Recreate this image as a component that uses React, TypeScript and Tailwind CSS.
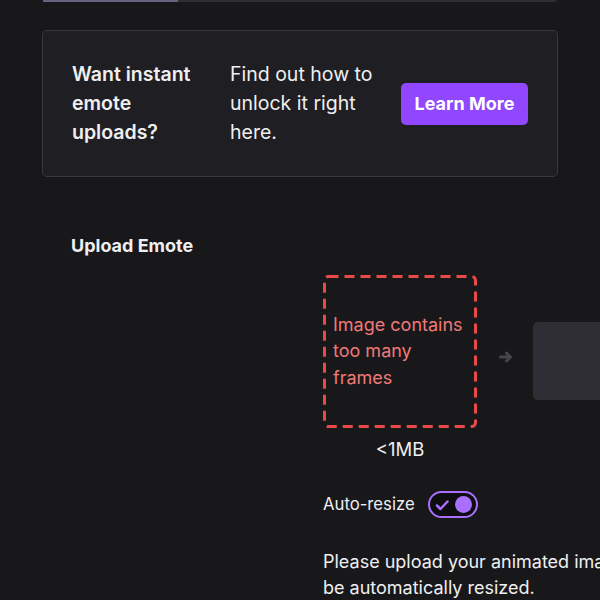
import React from "react";

const Toggle: React.FC = () => (
    <div className="relative w-[50px] h-[27px] rounded-full border-2 border-[#a970ff] bg-[#0e0e10] flex items-center justify-between px-[4px]">
        <svg width="15" height="14" viewBox="0 0 15 14" className="ml-[1px]">
            <path d="M2 7.5 L5.5 11 L12.5 3.5" fill="none" stroke="#a970ff" strokeWidth="2.5" strokeLinecap="round" strokeLinejoin="round" />
        </svg>
        <div className="w-[17px] h-[17px] rounded-full bg-[#a970ff]" />
    </div>
);

const Arrow: React.FC = () => (
    <svg width="14" height="12" viewBox="0 0 14 12">
        <path d="M1.5 6 H11 M7.5 2 L11.5 6 L7.5 10" fill="none" stroke="#45454b" strokeWidth="3" strokeLinecap="round" strokeLinejoin="round" />
    </svg>
);

export default function App() {
    return (
        <div
            className="w-[600px] h-[600px] overflow-hidden bg-[#18181b] text-[#efeff1]"
            style={{ fontFamily: "Inter, 'Noto Sans', sans-serif" }}
        >
            <div className="mx-[43px] w-[514px]">
                {/* progress bar tail */}
                <div className="h-[2px] bg-[#2e2e33] rounded-b">
                    <div className="h-full w-[135px] bg-[#6a6080]" />
                </div>

                {/* Promo card */}
                <div className="mt-[28px] -mx-[1px] flex items-center rounded-[5px] border border-[#38383e] bg-[#1f1f23] px-[29px] h-[147px]">
                    <div className="w-[150px] mr-[8px] text-[19.5px] leading-[29px] font-semibold">
                        Want instant emote uploads?
                    </div>
                    <div className="w-[165px] text-[19.5px] leading-[29px]">
                        Find out how to unlock it right here.
                    </div>
                    <button className="ml-auto h-[42px] w-[127px] rounded-[5px] bg-[#9147ff] text-[18px] font-bold text-white">
                        Learn More
                    </button>
                </div>

                {/* Upload */}
                <div className="mt-[57px] grid grid-cols-[252px_420px] px-[28px]">
                    <div className="text-[18px] leading-[24px] font-bold">Upload Emote</div>
                    <div />
                    <div />
                    <div className="mt-[17px]">
                        <div className="flex items-start">
                            <div className="flex flex-col items-center">
                                <div className="relative w-[154px] h-[153px] flex items-center px-[10px]">
                                    <svg className="absolute inset-0" width="154" height="153">
                                        <rect x="1.5" y="1.5" width="151" height="150" rx="4" fill="none" stroke="#e8494b" strokeWidth="3" strokeDasharray="10 6" />
                                    </svg>
                                    <span className="text-[18px] leading-[26.5px] text-[#f07878]">
                                        Image contains too many frames
                                    </span>
                                </div>
                                <div className="mt-[10px] text-[18.5px] leading-[22px]">&lt;1MB</div>
                            </div>
                            <div className="mt-[76px] ml-[22px] mr-[20px]">
                                <Arrow />
                            </div>
                            <div className="mt-[47px] w-[112px] h-[78px] rounded-[5px] bg-[#2e2e34]" />
                        </div>

                        <div className="mt-[31px] flex items-center gap-[13px]">
                            <span className="text-[16.7px]">Auto-resize</span>
                            <Toggle />
                        </div>

                        <p className="mt-[31px] w-[410px] text-[18px] leading-[26px]">
                            Please upload your animated image and it will be automatically resized.
                        </p>
                    </div>
                </div>
            </div>
        </div>
    );
}
